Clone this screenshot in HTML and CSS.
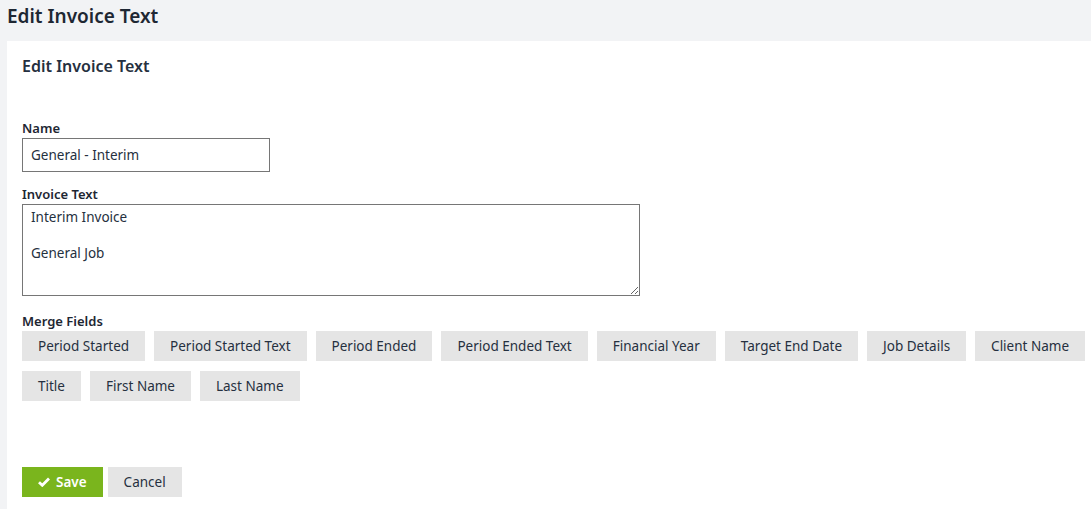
FILE: index.html
```html
<!DOCTYPE html>
<html>
<head>
<meta charset="utf-8">
<link rel="stylesheet" href="styles.css">
</head>
<body>
<div class="page-header">Edit Invoice Text</div>
<div class="card">
  <h2 class="card-title">Edit Invoice Text</h2>
  <div class="field">
    <label class="label">Name</label>
    <input class="input" type="text" value="General - Interim">
  </div>
  <div class="field field-wide">
    <label class="label">Invoice Text</label>
    <textarea class="textarea">Interim Invoice

General Job</textarea>
  </div>
  <div class="field">
    <label class="label">Merge Fields</label>
    <div class="chips">
      <button class="chip">Period Started</button>
      <button class="chip">Period Started Text</button>
      <button class="chip">Period Ended</button>
      <button class="chip">Period Ended Text</button>
      <button class="chip">Financial Year</button>
      <button class="chip">Target End Date</button>
      <button class="chip">Job Details</button>
      <button class="chip">Client Name</button>
      <button class="chip">Title</button>
      <button class="chip">First Name</button>
      <button class="chip">Last Name</button>
    </div>
  </div>
  <div class="actions">
    <button class="btn btn-primary"><svg class="check" viewBox="0 0 12 10" width="12" height="10"><path d="M1 5.2 L4.3 8.3 L11 1.6" fill="none" stroke="#fff" stroke-width="2.8"/></svg>Save</button>
    <button class="btn btn-default">Cancel</button>
  </div>
</div>
</body>
</html>
```
FILE: styles.css
```css
html, body {
  margin: 0;
  padding: 0;
}
body {
  background: #f2f3f5;
  font-family: "Noto Sans", "Open Sans", sans-serif;
  color: #253040;
  height: 509px;
  overflow: hidden;
}
.page-header {
  height: 41px;
  box-sizing: border-box;
  padding: 3px 0 0 7px;
  font-size: 19px;
  font-weight: 600;
  line-height: 26px;
  color: #1e2733;
}
.card {
  background: #fff;
  margin-left: 7px;
  padding: 14px 0 0 15px;
  height: 468px;
  box-sizing: border-box;
}
.card-title {
  margin: 0 0 42px 0;
  font-size: 16px;
  font-weight: 600;
  line-height: 22px;
  color: #253040;
}
.field {
  display: flex;
  flex-direction: column;
  align-items: flex-start;
  margin-bottom: 13px;
}
.field-wide {
  margin-bottom: 16px;
}
.label {
  font-size: 13px;
  font-weight: 600;
  line-height: 18px;
  margin-bottom: 1px;
  color: #1e2733;
}
.input {
  width: 248px;
  height: 34px;
  box-sizing: border-box;
  border: 1px solid #767676;
  border-radius: 0;
  padding: 0 8px;
  font-family: inherit;
  font-size: 13.5px;
  color: #253040;
}
.textarea {
  width: 618px;
  height: 92px;
  box-sizing: border-box;
  border: 1px solid #767676;
  border-radius: 0;
  padding: 3px 8px;
  font-family: inherit;
  font-size: 13.5px;
  line-height: 18px;
  color: #253040;
  resize: both;
}
.chips {
  display: flex;
  flex-wrap: wrap;
  gap: 10px 9px;
}
.chip {
  height: 30px;
  border: none;
  background: #e5e5e5;
  padding: 0 16px;
  font-family: inherit;
  font-size: 13.5px;
  color: #253040;
  cursor: pointer;
}
.actions {
  display: flex;
  gap: 5px;
  margin-top: 66px;
}
.btn {
  height: 30px;
  border: none;
  padding: 0 16px;
  font-family: inherit;
  font-size: 13.5px;
  display: flex;
  align-items: center;
  gap: 6px;
}
.btn-primary {
  background: #7ab51d;
  color: #fff;
  font-weight: 600;
}
.btn-default {
  background: #e5e5e5;
  color: #253040;
}
.check {
  display: block;
}
```
